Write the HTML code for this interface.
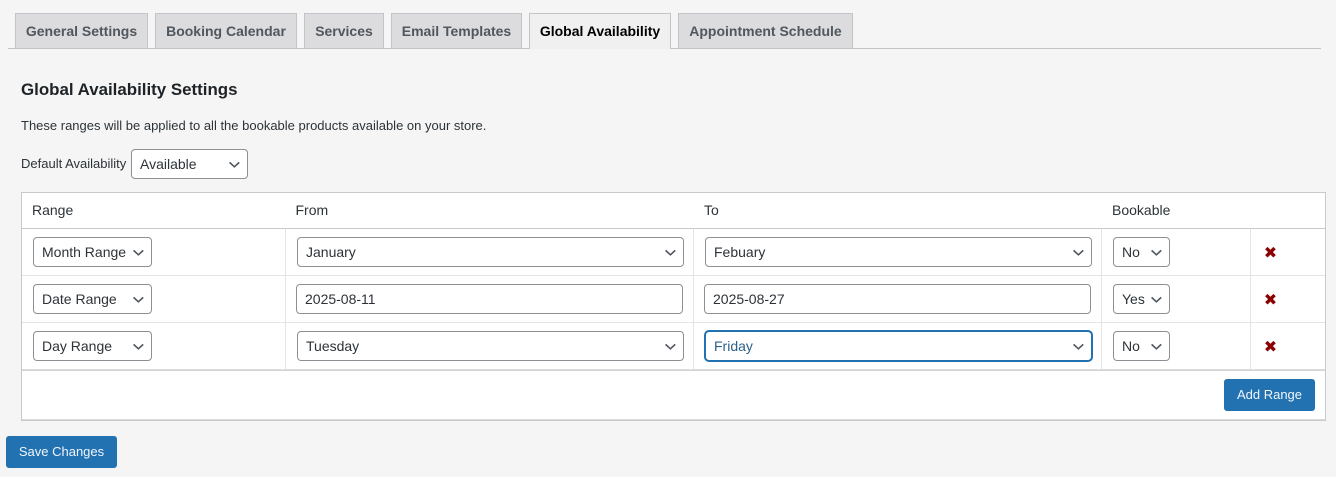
<!DOCTYPE html>
<html lang="en">
<head>
<meta charset="utf-8">
<title>Global Availability Settings</title>
<style>
html,body{margin:0;padding:0;width:1336px;height:477px;overflow:hidden;background:#f5f5f5;}
body{position:relative;font-family:"Liberation Sans",sans-serif;font-size:13px;color:#3c434a;}
.tab{position:absolute;top:13px;height:35px;box-sizing:border-box;border:1px solid #c3c4c7;border-bottom:none;background:#dcdcde;color:#50575e;font-size:14px;font-weight:700;line-height:34px;text-align:center;white-space:nowrap;}
.tab.on{background:#f0f0f1;color:#000;height:36px;z-index:2;}
.tabline{position:absolute;left:8px;top:48px;width:1313px;height:1px;background:#c3c4c7;}
h2{position:absolute;margin:0;left:21px;top:79px;font-size:16.9px;line-height:21px;font-weight:700;color:#1d2327;white-space:nowrap;}
.t{position:absolute;white-space:nowrap;}
.panel{position:absolute;left:21px;top:192px;width:1305px;height:229px;box-sizing:border-box;border:1px solid #c8c9cc;background:#fff;}
.h{position:absolute;height:1px;left:22px;width:1303px;}
.v{position:absolute;width:1px;background:#e4e4e6;top:229px;height:140px;}
.th{position:absolute;top:202px;font-size:14px;line-height:16px;color:#2c3338;white-space:nowrap;}
select,input{position:absolute;box-sizing:border-box;height:30px;margin:0;padding:0 8px;border:1px solid #8c8f94;border-radius:4px;background:#fff;color:#2c3338;font-family:"Liberation Sans",sans-serif;font-size:14px;line-height:28px;-webkit-appearance:none;appearance:none;outline:none;}
select.focus{border-color:#2271b1;box-shadow:0 0 0 1px #2271b1;color:#2c5f8a;}
svg.c{position:absolute;width:16px;height:16px;pointer-events:none;}
svg.c path{fill:none;stroke:#50575e;stroke-width:1.6;}
.x{position:absolute;left:1260.5px;width:20px;height:20px;text-align:center;font-family:"DejaVu Sans",sans-serif;font-size:16px;line-height:20px;color:#8b0000;}
button{position:absolute;box-sizing:border-box;height:32px;margin:0;padding:0;border:1px solid #2271b1;border-radius:3px;background:#2271b1;color:#f0f6fc;font-family:"Liberation Sans",sans-serif;font-size:13px;line-height:30px;text-align:center;}
</style>
</head>
<body>
<div class="tabline"></div>
<div class="tab" style="left:15px;width:133px">General Settings</div>
<div class="tab" style="left:155px;width:142px">Booking Calendar</div>
<div class="tab" style="left:304px;width:80px">Services</div>
<div class="tab" style="left:391px;width:131px">Email Templates</div>
<div class="tab on" style="left:529px;width:142px">Global Availability</div>
<div class="tab" style="left:678px;width:175px">Appointment Schedule</div>

<h2>Global Availability Settings</h2>
<div class="t" style="left:21px;top:118px;line-height:16px;color:#2c3338">These ranges will be applied to all the bookable products available on your store.</div>
<div class="t" style="left:21px;top:156px;line-height:16px;color:#2c3338">Default Availability</div>
<select style="left:131px;top:149px;width:117px"><option>Available</option></select>
<svg class="c" style="left:226px;top:156px" viewBox="0 0 16 16"><path d="M3.6 6.4L8.4 10.8L13.2 6.4"/></svg>

<div class="panel"></div>
<div class="th" style="left:32px">Range</div>
<div class="th" style="left:295.5px">From</div>
<div class="th" style="left:704px">To</div>
<div class="th" style="left:1112px">Bookable</div>

<div class="h" style="top:228px;background:#c8c9cc"></div>
<div class="h" style="top:275px;background:#e4e4e6"></div>
<div class="h" style="top:322px;background:#e4e4e6"></div>
<div class="h" style="top:369px;background:#dcdcde"></div>
<div class="h" style="top:370px;background:#d4d4d6"></div>
<div class="h" style="top:419px;background:#dcdcde"></div>
<div class="v" style="left:285px"></div>
<div class="v" style="left:693px"></div>
<div class="v" style="left:1101px"></div>
<div class="v" style="left:1250px"></div>

<!-- row 1 -->
<select style="left:33px;top:237px;width:119px"><option>Month Range</option></select>
<svg class="c" style="left:130px;top:244px" viewBox="0 0 16 16"><path d="M3.6 6.4L8.4 10.8L13.2 6.4"/></svg>
<select style="left:297px;top:237px;width:387px"><option>January</option></select>
<svg class="c" style="left:662px;top:244px" viewBox="0 0 16 16"><path d="M3.6 6.4L8.4 10.8L13.2 6.4"/></svg>
<select style="left:705px;top:237px;width:387px"><option>Febuary</option></select>
<svg class="c" style="left:1070px;top:244px" viewBox="0 0 16 16"><path d="M3.6 6.4L8.4 10.8L13.2 6.4"/></svg>
<select style="left:1113px;top:237px;width:57px"><option>No</option></select>
<svg class="c" style="left:1148px;top:244px" viewBox="0 0 16 16"><path d="M3.6 6.4L8.4 10.8L13.2 6.4"/></svg>
<div class="x" style="top:242.5px">✖</div>

<!-- row 2 -->
<select style="left:33px;top:284px;width:119px"><option>Date Range</option></select>
<svg class="c" style="left:130px;top:291px" viewBox="0 0 16 16"><path d="M3.6 6.4L8.4 10.8L13.2 6.4"/></svg>
<input type="text" value="2025-08-11" style="left:296px;top:284px;width:387px">
<input type="text" value="2025-08-27" style="left:704px;top:284px;width:387px">
<select style="left:1113px;top:284px;width:57px"><option>Yes</option></select>
<svg class="c" style="left:1148px;top:291px" viewBox="0 0 16 16"><path d="M3.6 6.4L8.4 10.8L13.2 6.4"/></svg>
<div class="x" style="top:289.5px">✖</div>

<!-- row 3 -->
<select style="left:33px;top:331px;width:119px"><option>Day Range</option></select>
<svg class="c" style="left:130px;top:338px" viewBox="0 0 16 16"><path d="M3.6 6.4L8.4 10.8L13.2 6.4"/></svg>
<select style="left:297px;top:331px;width:387px"><option>Tuesday</option></select>
<svg class="c" style="left:662px;top:338px" viewBox="0 0 16 16"><path d="M3.6 6.4L8.4 10.8L13.2 6.4"/></svg>
<select class="focus" style="left:705px;top:331px;width:387px"><option>Friday</option></select>
<svg class="c" style="left:1070px;top:338px" viewBox="0 0 16 16"><path d="M3.6 6.4L8.4 10.8L13.2 6.4"/></svg>
<select style="left:1113px;top:331px;width:57px"><option>No</option></select>
<svg class="c" style="left:1148px;top:338px" viewBox="0 0 16 16"><path d="M3.6 6.4L8.4 10.8L13.2 6.4"/></svg>
<div class="x" style="top:336.5px">✖</div>

<button type="button" style="left:1224px;top:379px;width:91px">Add Range</button>
<button type="button" style="left:6px;top:436px;width:111px">Save Changes</button>
</body>
</html>
